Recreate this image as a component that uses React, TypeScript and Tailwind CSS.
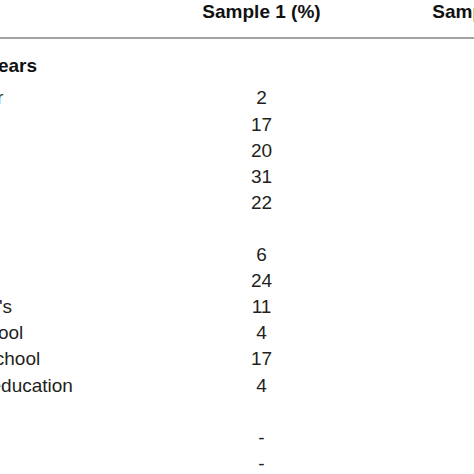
const COLUMNS = ["Sample 1 (%)", "Sample 2 (%)"]

type Section = {
  title: string
  rows: { label: string; values: [string, string] }[]
}

const SECTIONS: Section[] = [
  {
    title: "Age in years",
    rows: [
      { label: "Teenager", values: ["2", "3"] },
      { label: "20–29", values: ["17", "19"] },
      { label: "30–39", values: ["20", "22"] },
      { label: "40–49", values: ["31", "28"] },
      { label: "50+", values: ["22", "21"] },
    ],
  },
  {
    title: "Degree",
    rows: [
      { label: "PhD", values: ["6", "5"] },
      { label: "Master's", values: ["24", "26"] },
      { label: "Bachelor's", values: ["11", "14"] },
      { label: "High school", values: ["4", "6"] },
      { label: "Middle school", values: ["17", "15"] },
      { label: "Further education", values: ["4", "3"] },
    ],
  },
  {
    title: "Status",
    rows: [
      { label: "Yes", values: ["-", "12"] },
      { label: "No", values: ["-", "88"] },
    ],
  },
]

export default function App() {
  return (
    <div className="h-[474px] w-[474px] overflow-hidden bg-white font-['Liberation_Sans',Arial,sans-serif] text-[19px] text-[#231f20]">
      <div className="-ml-[76px] w-[682.5px]">
        <div className="grid h-[39px] grid-cols-[222.5px_230px_230px] border-b-2 border-[#a3a3a3] font-bold leading-[24px] text-[#111]">
          <div />
          {COLUMNS.map((col) => (
            <div key={col} className="text-center">
              {col}
            </div>
          ))}
        </div>

        <div className="pt-[14.2px]">
          {SECTIONS.map((section, i) => (
            <div key={section.title}>
              <div
                className={`font-bold leading-[26px] text-[#111] ${
                  i === 0 ? "h-[32.3px]" : "h-[26.1px]"
                }`}
              >
                {section.title}
              </div>
              {section.rows.map((row) => (
                <div
                  key={row.label}
                  className="grid h-[26.1px] grid-cols-[222.5px_230px_230px] leading-[26px]"
                >
                  <div className="whitespace-nowrap">{row.label}</div>
                  {row.values.map((v, j) => (
                    <div key={j} className="text-center">
                      {v}
                    </div>
                  ))}
                </div>
              ))}
            </div>
          ))}
        </div>
      </div>
    </div>
  )
}
